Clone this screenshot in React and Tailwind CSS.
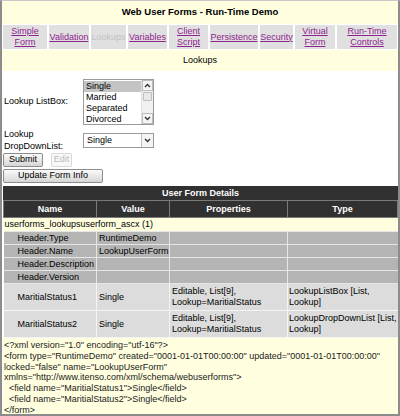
const navItems = [
  { label: ["Simple", "Form"], w: "w-[44px]" },
  { label: ["Validation"], w: "w-[40px]" },
  { label: ["Lookups"], w: "w-[35px]", disabled: true },
  { label: ["Variables"], w: "w-[39px]" },
  { label: ["Client", "Script"], w: "w-[39px]" },
  { label: ["Persistence"], w: "w-[48px]" },
  { label: ["Security"], w: "w-[33px]" },
  { label: ["Virtual", "Form"], w: "w-[40px]" },
  { label: ["Run-Time", "Controls"], w: "flex-1" },
];

const headerRows = [
  ["Header.Type", "RuntimeDemo"],
  ["Header.Name", "LookupUserForm"],
  ["Header.Description", ""],
  ["Header.Version", ""],
];

const fieldRows = [
  ["MaritialStatus1", "Single", "LookupListBox [List,"],
  ["MaritialStatus2", "Single", "LookupDropDownList [List,"],
];

const xmlLines = [
  '<?xml version="1.0" encoding="utf-16"?>',
  '<form type="RuntimeDemo" created="0001-01-01T00:00:00" updated="0001-01-01T00:00:00"',
  'locked="false" name="LookupUserForm"',
  'xmlns="http://www.itenso.com/xml/schema/webuserforms">',
  '  <field name="MaritialStatus1">Single</field>',
  '  <field name="MaritialStatus2">Single</field>',
  "</form>",
];

function ListBox() {
  return (
    <div className="flex w-[71px] h-[46px] border border-[#9a9a9a] bg-white">
      <div className="flex-1 pt-[1px] leading-[11px]">
        <div className="bg-[#c4c4c4] pl-[2px]">Single</div>
        <div className="pl-[2px]">Married</div>
        <div className="pl-[2px]">Separated</div>
        <div className="pl-[2px]">Divorced</div>
      </div>
      <div className="w-[12px] flex flex-col bg-[#f0f0f0] border-l border-[#e0e0e0]">
        <div className="h-[11px] border border-[#bdbdbd] bg-[#f4f4f4] flex items-center justify-center">
          <svg width="7" height="5" viewBox="0 0 7 5">
            <path d="M1 4 L3.5 1.5 L6 4" stroke="#333" strokeWidth="1.4" fill="none" />
          </svg>
        </div>
        <div className="h-[9px] mt-[1px] mx-[1px] border border-[#bdbdbd] bg-[#e8e8e8] rounded-[1px]" />
        <div className="flex-1" />
        <div className="h-[11px] border border-[#bdbdbd] bg-[#f4f4f4] flex items-center justify-center">
          <svg width="7" height="5" viewBox="0 0 7 5">
            <path d="M1 1 L3.5 3.5 L6 1" stroke="#333" strokeWidth="1.4" fill="none" />
          </svg>
        </div>
      </div>
    </div>
  );
}

function DropDown() {
  return (
    <div className="flex w-[71px] h-[15px] border border-[#9a9a9a] bg-white items-center">
      <div className="flex-1 pl-[3px] leading-[11px]">Single</div>
      <div className="w-[12px] h-full border-l border-[#bdbdbd] bg-[#f4f4f4] flex items-center justify-center">
        <svg width="7" height="5" viewBox="0 0 7 5">
          <path d="M1 1 L3.5 3.5 L6 1" stroke="#333" strokeWidth="1.4" fill="none" />
        </svg>
      </div>
    </div>
  );
}

function Btn({ children, w, disabled }) {
  return (
    <div
      className={`${w} h-[14px] flex items-center justify-center rounded-[2px] border ${
        disabled
          ? "border-[#d8d8d8] text-[#b8b8b8] bg-[#f8f8f8]"
          : "border-[#8c8c8c] bg-gradient-to-b from-[#fafafa] to-[#d6d6d6] text-black"
      }`}
    >
      {children}
    </div>
  );
}

export default function App() {
  return (
    <div
      className="w-[400px] h-[416px] overflow-hidden bg-white border-x-2 border-b-2 border-t border-[#8c8c8c] border-t-[#c8c8c8] text-[9px] text-black"
      style={{ fontFamily: '"Liberation Sans", Arial, sans-serif' }}
    >
      <div className="h-[23px] bg-[#ffffe0] flex items-center justify-center font-bold text-[9.5px]">
        Web User Forms - Run-Time Demo
      </div>
      <div className="flex gap-[2px] px-[1px] h-[24px] mt-[1px]">
        {navItems.map((n, i) => (
          <div
            key={i}
            className={`${n.w} bg-[#e0e0e0] flex flex-col items-center justify-center text-center leading-[11px]`}
          >
            {n.label.map((l, j) => (
              <span
                key={j}
                className={n.disabled ? "text-[#c2c2c2]" : "text-[#8e248e] underline"}
              >
                {l}
              </span>
            ))}
          </div>
        ))}
      </div>
      <div className="h-[21px] mt-[1px] bg-[#ffffe0] flex items-center justify-center">Lookups</div>

      <div className="px-[1px] pt-[8px]">
        <div className="flex items-center">
          <div className="w-[80px] pl-[1px]">Lookup ListBox:</div>
          <ListBox />
        </div>
        <div className="flex items-center mt-[3px]">
          <div className="w-[80px] pl-[1px] leading-[12px]">
            Lookup
            <br />
            DropDownList:
          </div>
          <DropDown />
        </div>
        <div className="flex items-center gap-[8px] mt-[1px]">
          <Btn w="w-[40px]">Submit</Btn>
          <Btn w="w-[21px]" disabled>
            Edit
          </Btn>
        </div>
        <div className="mt-[2px]">
          <Btn w="w-[100px]">Update Form Info</Btn>
        </div>
      </div>

      <table className="w-[395px] ml-[1px] mt-[3px] table-fixed border-collapse leading-[11px]">
        <colgroup>
          <col className="w-[93px]" />
          <col className="w-[73px]" />
          <col className="w-[118px]" />
          <col />
        </colgroup>
        <thead>
          <tr className="h-[14px] bg-[#313131] text-white font-bold">
            <th colSpan={4} className="p-0 border border-[#313131] border-b-[#7a7a7a] font-bold">
              User Form Details
            </th>
          </tr>
          <tr className="h-[17px] bg-[#313131] text-white">
            {["Name", "Value", "Properties", "Type"].map((h) => (
              <th key={h} className="p-0 border border-[#7a7a7a] border-t-0 font-bold">
                {h}
              </th>
            ))}
          </tr>
        </thead>
        <tbody>
          <tr className="h-[14px] bg-[#ffffe0]">
            <td colSpan={4} className="pl-[1px]">
              userforms_lookupsuserform_ascx (1)
            </td>
          </tr>
          {headerRows.map(([n, v]) => (
            <tr key={n} className="h-[13px] bg-[#b4b4b4]">
              <td className="pl-[14px] border border-[#e6e6e6] border-l-0 whitespace-nowrap">{n}</td>
              <td className="pl-[2px] border border-[#e6e6e6] whitespace-nowrap">{v}</td>
              <td className="border border-[#e6e6e6]" />
              <td className="border border-[#e6e6e6] border-r-0" />
            </tr>
          ))}
          {fieldRows.map(([n, v, t]) => (
            <tr key={n} className="h-[27px] bg-[#dcdcdc]">
              <td className="pl-[14px] border border-[#f4f4f4] border-l-0">{n}</td>
              <td className="pl-[2px] border border-[#f4f4f4]">{v}</td>
              <td className="pl-[2px] border border-[#f4f4f4]">
                Editable, List[9],
                <br />
                Lookup=MaritialStatus
              </td>
              <td className="pl-[1px] border border-[#f4f4f4] border-r-0 whitespace-nowrap overflow-hidden">
                {t}
                <br />
                Lookup]
              </td>
            </tr>
          ))}
        </tbody>
      </table>

      <div className="bg-[#ffffe0] ml-[1px] w-[395px] h-[80px] pt-[2px] pl-[1px] leading-[10.8px] whitespace-pre text-[#1a1a1a]">
        {xmlLines.map((l, i) => (
          <div key={i}>{l}</div>
        ))}
      </div>
    </div>
  );
}
